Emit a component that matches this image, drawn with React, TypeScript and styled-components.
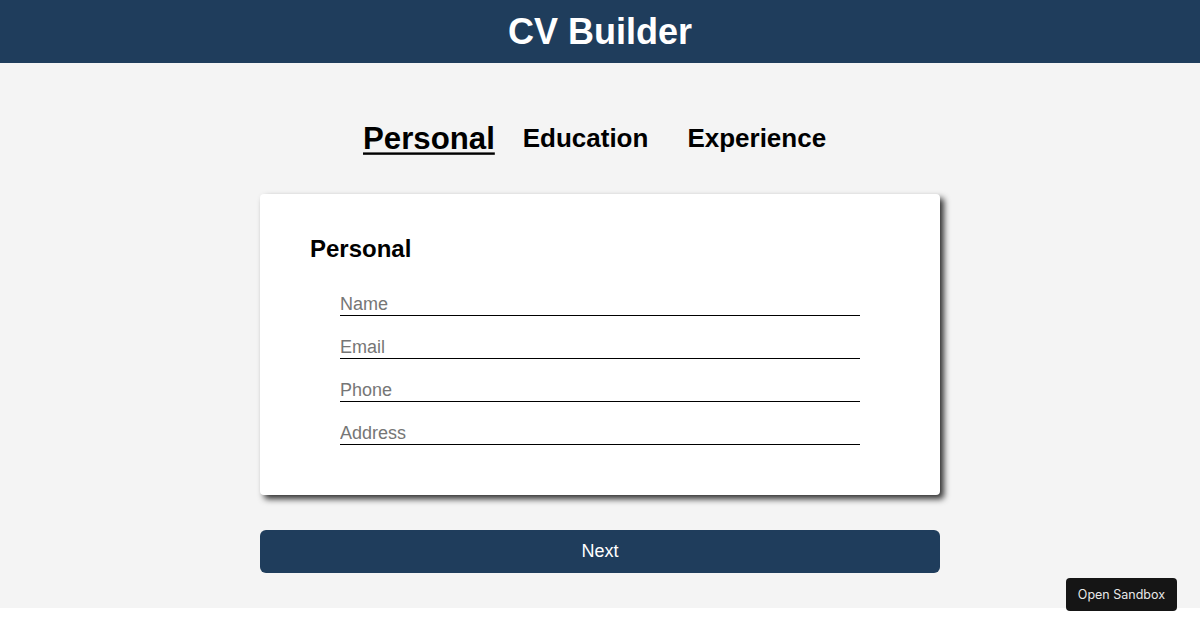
import React, { useState } from "react";
import styled, { createGlobalStyle, css } from "styled-components";

const GlobalStyle = createGlobalStyle`
  * {
    box-sizing: border-box;
  }
  body {
    margin: 0;
    background: #ffffff;
    font-family: "Liberation Sans", Arial, Helvetica, sans-serif;
  }
`;

const Header = styled.header`
  height: 63px;
  background-color: #1f3d5c;
  display: flex;
  align-items: center;
  justify-content: center;
`;

const Title = styled.h1`
  margin: 0;
  color: #ffffff;
  font-size: 36px;
  font-weight: bold;
  line-height: 40px;
`;

const Main = styled.main`
  background-color: #f4f4f4;
  padding: 60px 0 35px;
  display: flex;
  flex-direction: column;
  align-items: center;
`;

const TabBar = styled.nav`
  display: flex;
  justify-content: center;
  gap: 39px;
`;

const Tab = styled.button<{ $active?: boolean }>`
  border: 0;
  background: none;
  padding: 0;
  font-family: inherit;
  font-size: 26px;
  font-weight: bold;
  line-height: 30px;
  color: #000000;
  cursor: pointer;
  ${(p) =>
    p.$active &&
    css`
      text-decoration: underline;
      text-decoration-thickness: 2px;
      text-underline-offset: 3px;
      transform: scale(1.2);
    `}
`;

const Card = styled.section`
  width: 680px;
  margin-top: 41px;
  background: #ffffff;
  border-radius: 4px;
  box-shadow: 4px 4px 6px rgba(0, 0, 0, 0.8);
  padding: 41px 50px 50px;
`;

const CardTitle = styled.h2`
  margin: 0 0 30px;
  font-size: 24px;
  line-height: 28px;
  font-weight: bold;
  color: #000000;
`;

const Fields = styled.div`
  display: flex;
  flex-direction: column;
  gap: 20px;
  padding: 0 30px;
`;

const Field = styled.input`
  height: 23px;
  width: 100%;
  border: 0;
  border-bottom: 1px solid #000000;
  background: transparent;
  padding: 0;
  font-family: inherit;
  font-size: 18px;
  color: #000000;
  outline: none;
  &::placeholder {
    color: #767676;
  }
`;

const NextButton = styled.button`
  width: 680px;
  height: 43px;
  margin-top: 35px;
  border: 0;
  border-radius: 6px;
  background-color: #1f3d5c;
  color: #ffffff;
  font-family: inherit;
  font-size: 18px;
  cursor: pointer;
`;

const SandboxButton = styled.button`
  position: fixed;
  right: 23px;
  bottom: 19px;
  height: 33px;
  padding: 0 12px;
  border: 0;
  border-radius: 4px;
  background: #151515;
  color: #e8e8e8;
  font-family: "Inter", "Liberation Sans", sans-serif;
  font-size: 12.5px;
  cursor: pointer;
`;

const tabs = ["Personal", "Education", "Experience"];

export default function App() {
  const [current, setCurrent] = useState("Personal");

  return (
    <>
      <GlobalStyle />
      <Header>
        <Title>CV Builder</Title>
      </Header>
      <Main>
        <TabBar>
          {tabs.map((t) => (
            <Tab key={t} $active={t === current} onClick={() => setCurrent(t)}>
              {t}
            </Tab>
          ))}
        </TabBar>
        <Card>
          <CardTitle>Personal</CardTitle>
          <Fields>
            <Field placeholder="Name" />
            <Field placeholder="Email" />
            <Field placeholder="Phone" />
            <Field placeholder="Address" />
          </Fields>
        </Card>
        <NextButton>Next</NextButton>
      </Main>
      <SandboxButton>Open Sandbox</SandboxButton>
    </>
  );
}
